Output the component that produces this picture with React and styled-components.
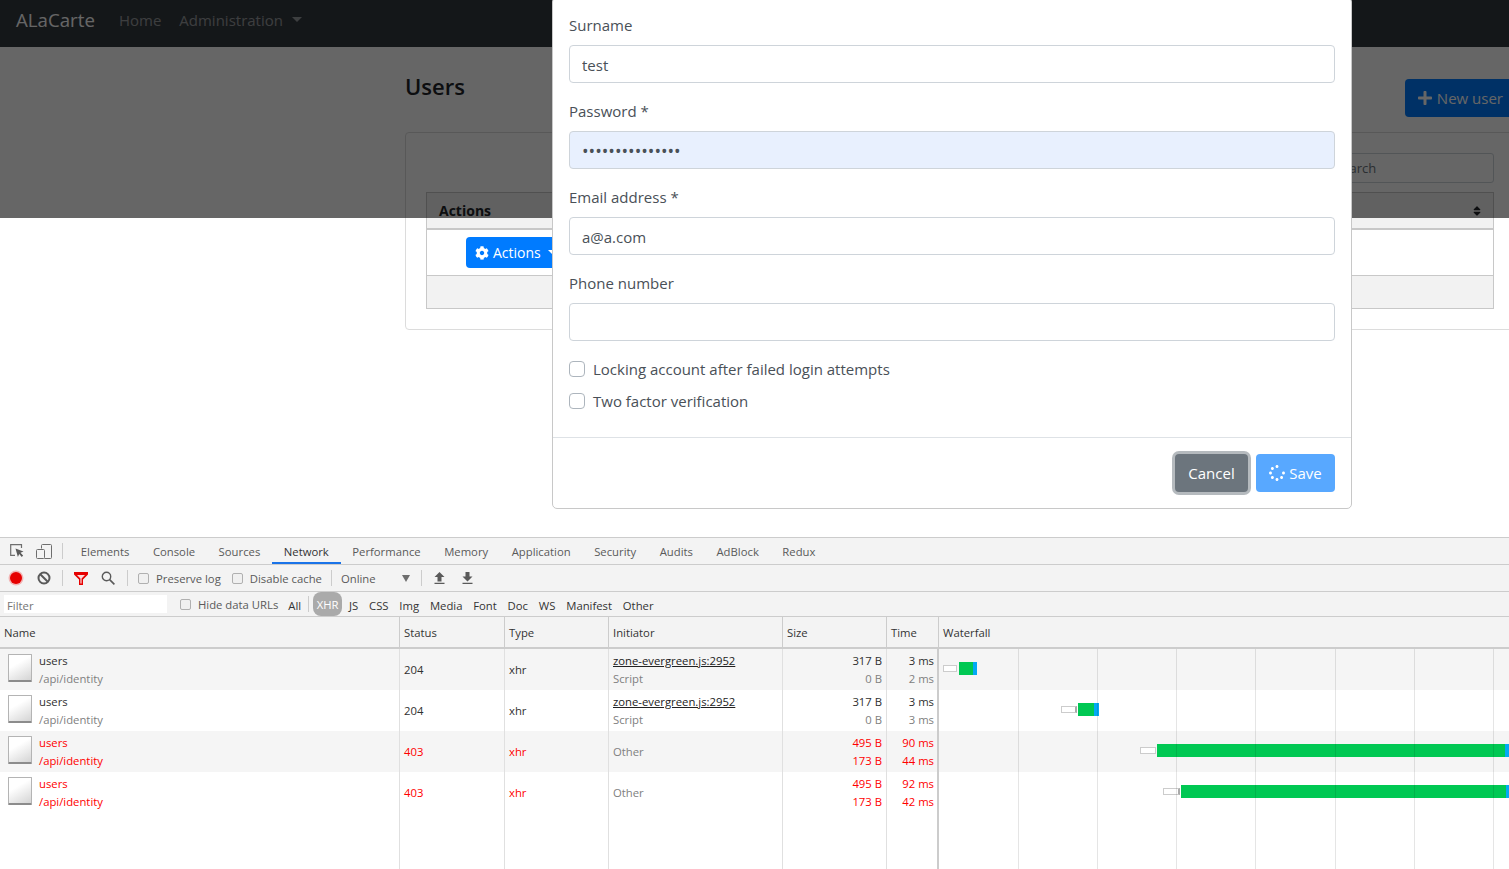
import styled, { createGlobalStyle } from 'styled-components';
import { FaCog, FaPlus, FaSort, FaSpinner } from 'react-icons/fa';

const GlobalStyle = createGlobalStyle`
  html, body {
    margin: 0;
    padding: 0;
    background: #fff;
  }
  * {
    box-sizing: border-box;
  }
`;

const FONT = `'Open Sans', 'Noto Sans', sans-serif`;

const Shell = styled.div`
  width: 1509px;
  height: 869px;
  display: flex;
  flex-direction: column;
  overflow: hidden;
  font-family: ${FONT};
`;

/* ---------- app under the devtools ---------- */

const AppArea = styled.div`
  position: relative;
  height: 537px;
  flex: none;
  overflow: hidden;
  background: #fff;
`;

const Navbar = styled.nav`
  height: 47px;
  background: #343a40;
  display: flex;
  align-items: center;
  padding: 0 0 8px 16px;
`;

const Brand = styled.a`
  color: #fff;
  font-size: 18.7px;
  margin-right: 24px;
`;

const NavLink = styled.a`
  color: rgba(255, 255, 255, 0.5);
  font-size: 15px;
  margin-right: 18px;
  display: flex;
  align-items: center;
`;

const Caret = styled.span`
  display: inline-block;
  margin-left: ${(p) => p.$gap || 9}px;
  border-top: 5px solid ${(p) => p.$color || 'rgba(255, 255, 255, 0.5)'};
  border-left: 5px solid transparent;
  border-right: 5px solid transparent;
`;

const Main = styled.main`
  width: 1110px;
  margin-left: 405px;
`;

const TitleRow = styled.div`
  display: flex;
  justify-content: space-between;
  align-items: flex-start;
  padding-top: 32px;
  margin-bottom: 15px;
`;

const Title = styled.h2`
  margin: -5px 0 0;
  line-height: 24px;
  font-size: 22px;
  font-weight: 600;
  color: #212529;
`;

const PrimaryButton = styled.button`
  height: 38px;
  padding: 0 12px;
  border: 0;
  border-radius: 4px;
  background: #007bff;
  color: #fff;
  font: 15px ${FONT};
  display: flex;
  align-items: center;
  gap: 4px;
`;

const Card = styled.section`
  border: 1px solid #dcdcdc;
  border-radius: 4px;
  padding: 20px;
`;

const SearchRow = styled.div`
  display: flex;
  justify-content: flex-end;
  margin-bottom: 9px;
`;

const SearchInput = styled.input`
  width: 172px;
  height: 30px;
  padding: 0 12px;
  border: 1px solid #ced4da;
  border-radius: 3px;
  font: 13px ${FONT};
  &::placeholder {
    color: #6c757d;
  }
`;

const Table = styled.div`
  border: 1px solid #c8c8c8;
`;

const TableHead = styled.div`
  height: 37px;
  background: #f2f2f2;
  border-bottom: 2px solid #c8c8c8;
  padding: 0 10px 0 12px;
  display: flex;
  justify-content: space-between;
  align-items: center;
  font-size: 14px;
  font-weight: 700;
  color: #212529;
`;

const TableRow = styled.div`
  height: 46px;
  padding-left: 39px;
  border-bottom: 1px solid #c8c8c8;
  display: flex;
  align-items: center;
`;

const TableFoot = styled.div`
  height: 32px;
  background: #f2f2f2;
`;

const ActionsButton = styled(PrimaryButton)`
  height: 31px;
  padding: 0 10px 0 9px;
  font-size: 14px;
`;

const Backdrop = styled.div`
  position: absolute;
  top: 0;
  left: 0;
  width: 100%;
  height: 218px;
  background: rgba(0, 0, 0, 0.6);
`;

const Modal = styled.div`
  position: absolute;
  top: -3px;
  left: 552px;
  width: 800px;
  background: #fff;
  border: 1px solid #c8c8c8;
  border-radius: 5px;
`;

const ModalBody = styled.div`
  padding: 15px 16px 16px;
`;

const FormGroup = styled.div`
  margin-bottom: 16px;
`;

const FieldLabel = styled.label`
  display: block;
  height: 24px;
  line-height: 24px;
  margin-bottom: 8px;
  font-size: 15px;
  color: #495057;
`;

const TextInput = styled.input`
  display: block;
  width: 100%;
  height: 38px;
  padding: 2px 12px 0;
  border: 1px solid #ced4da;
  border-radius: 4px;
  font: 15px ${FONT};
  color: #495057;
  background: #fff;
`;

const PasswordInput = styled(TextInput).attrs({ type: 'password' })`
  font-size: 17.5px;
  background: #e8f0fe;
`;

const CheckRow = styled.label`
  display: flex;
  align-items: center;
  gap: 8px;
  height: 24px;
  margin-bottom: 8px;
  font-size: 15px;
  color: #495057;
`;

const ModalCheck = styled.input.attrs({ type: 'checkbox' })`
  appearance: none;
  width: 16px;
  height: 16px;
  margin: 0;
  border: 1px solid #adb5bd;
  border-radius: 4px;
  background: #fff;
`;

const ModalFooter = styled.div`
  border-top: 1px solid #dee2e6;
  padding: 16px;
  display: flex;
  justify-content: flex-end;
  gap: 8px;
`;

const CancelButton = styled.button`
  height: 38px;
  width: 73px;
  border: 0;
  border-radius: 4px;
  background: #6c757d;
  color: #fff;
  font: 15px ${FONT};
  box-shadow: 0 0 0 3px rgba(108, 117, 125, 0.5);
`;

const SaveButton = styled(PrimaryButton)`
  width: 79px;
  background: #58a8ff;
  justify-content: center;
`;

/* ---------- devtools ---------- */

const Devtools = styled.div`
  flex: 1;
  min-height: 0;
  display: flex;
  flex-direction: column;
  border-top: 1px solid #ccc;
  background: #f3f3f3;
  font-size: 11.3px;
  color: #5a5a5a;
`;

const Bar = styled.div`
  height: ${(p) => p.$height}px;
  flex: none;
  display: flex;
  align-items: center;
  border-bottom: 1px solid #ccc;
`;

const IconSlot = styled.span`
  display: flex;
  align-items: center;
  justify-content: center;
  width: ${(p) => p.$width || 28}px;
  height: 100%;
  flex: none;
`;

const Divider = styled.span`
  width: 1px;
  height: 16px;
  background: #ccc;
  flex: none;
  margin: ${(p) => p.$margin || '0 8px'};
`;

const Tab = styled.div`
  height: 100%;
  display: flex;
  align-items: center;
  padding: 0 11.75px;
  color: ${(p) => (p.$active ? '#333' : '#5a5a5a')};
  box-shadow: ${(p) => (p.$active ? 'inset 0 -2px 0 #1a73e8' : 'none')};
`;

const DevCheck = styled.input.attrs({ type: 'checkbox' })`
  appearance: none;
  width: 11px;
  height: 11px;
  margin: 0 7px 0 0;
  border: 1px solid #b0b0b0;
  border-radius: 2px;
  background: #f0f0f0;
  flex: none;
`;

const CheckLabel = styled.label`
  display: flex;
  align-items: center;
  margin-right: ${(p) => p.$gap || 11}px;
  white-space: nowrap;
`;

const ThrottleSelect = styled.div`
  width: 69px;
  display: flex;
  align-items: center;
  justify-content: space-between;
  flex: none;
`;

const SelectArrow = styled.span`
  border-top: 7px solid #6e6e6e;
  border-left: 4px solid transparent;
  border-right: 4px solid transparent;
`;

const FilterInput = styled.input`
  width: 163px;
  height: 18px;
  margin: 0 13px 0 4px;
  padding: 2px 3px 0;
  border: 0;
  background: #fff;
  font: 11.3px ${FONT};
  &::placeholder {
    color: #757575;
  }
`;

const TypeChip = styled.span`
  padding: ${(p) => (p.$active ? '5px 3.5px 4px' : '2px 0 0')};
  margin-right: ${(p) => (p.$active ? 7 : p.$gap || 10.8)}px;
  border-radius: 8px;
  background: ${(p) => (p.$active ? '#aaa' : 'transparent')};
  color: ${(p) => (p.$active ? '#fff' : '#333')};
`;

const COLUMNS = '400px 105px 104px 174px 104px 52px 1fr';

const HeaderRow = styled.div`
  height: 32px;
  flex: none;
  display: grid;
  grid-template-columns: ${COLUMNS};
  border-bottom: 2px solid #ccc;
`;

const HeaderCell = styled.div`
  display: flex;
  align-items: center;
  padding-left: 4px;
  border-right: 1px solid #ccc;
  color: #333;
  &:last-child {
    border-right: 0;
  }
`;

const Row = styled.div`
  height: 41px;
  flex: none;
  display: grid;
  grid-template-columns: ${COLUMNS};
  background: ${(p) => (p.$shaded ? '#f5f5f5' : '#fff')};
  color: ${(p) => (p.$failed ? '#f00' : '#303030')};
`;

const Filler = styled(Row)`
  flex: 1;
  height: auto;
  background: #fff;
`;

const Cell = styled.div`
  padding: ${(p) => (p.$heavy ? '0 3px 0 4px' : '0 4px')};
  border-right: ${(p) => (p.$heavy ? '2px solid #ccc' : '1px solid #e0e0e0')};
  display: flex;
  flex-direction: column;
  justify-content: center;
  align-items: ${(p) => (p.$right ? 'flex-end' : 'flex-start')};
  line-height: 18px;
  white-space: nowrap;
`;

const NameCell = styled(Cell)`
  flex-direction: row;
  justify-content: flex-start;
  align-items: center;
  padding-left: 8px;
  gap: 7px;
`;

const FileIcon = styled.span`
  width: 24px;
  height: 28px;
  flex: none;
  margin-bottom: 3px;
  border: 1px solid #b4b4b4;
  border-bottom: 2px solid #8c8c8c;
  border-radius: 1px;
  background: linear-gradient(150deg, #fff 35%, #d4d4d4);
`;

const Stack = styled.div`
  display: flex;
  flex-direction: column;
`;

const Sub = styled.span`
  color: ${(p) => (p.$failed ? '#f00' : '#808080')};
`;

const InitiatorLink = styled.span`
  text-decoration: underline;
  color: #222;
`;

const WaterfallCell = styled.div`
  position: relative;
  overflow: hidden;
`;

const GridLine = styled.span`
  position: absolute;
  top: 0;
  bottom: 0;
  left: ${(p) => p.$left}px;
  width: 1px;
  background: rgba(0, 0, 0, 0.1);
`;

const Segment = styled.span`
  position: absolute;
  top: 13px;
  height: 13px;
  left: ${(p) => p.$left}px;
  width: ${(p) => p.$width}px;
  background: ${(p) => p.$color};
`;

const WaitSegment = styled.span`
  position: absolute;
  top: 16px;
  height: 7px;
  left: ${(p) => p.$left}px;
  width: ${(p) => p.$width}px;
  background: #fff;
  border: 1px solid #ccc;
  border-right: ${(p) => (p.$tail ? '2px solid #aaa' : '1px solid #ccc')};
`;

const TABS = ['Elements', 'Console', 'Sources', 'Network', 'Performance', 'Memory', 'Application', 'Security', 'Audits', 'AdBlock', 'Redux'];
const TYPES = ['JS', 'CSS', 'Img', 'Media', 'Font', 'Doc', 'WS', 'Manifest', 'Other'];
const GRID_LINES = [79, 158, 237, 316, 396, 475, 554];

const REQUESTS = [
  { status: '204', initiator: true, size: ['317 B', '0 B'], time: ['3 ms', '2 ms'], bar: { wait: [4, 14], green: [20, 14], blue: [34, 4] } },
  { status: '204', initiator: true, size: ['317 B', '0 B'], time: ['3 ms', '3 ms'], bar: { wait: [122, 16], tail: true, green: [139, 16], blue: [155, 5] } },
  { status: '403', failed: true, size: ['495 B', '173 B'], time: ['90 ms', '44 ms'], bar: { wait: [201, 16], green: [218, 348], blue: [566, 4] } },
  { status: '403', failed: true, size: ['495 B', '173 B'], time: ['92 ms', '42 ms'], bar: { wait: [224, 17], tail: true, green: [242, 325], blue: [567, 3] } },
];

const InspectIcon = () => (
  <svg width="14" height="14" viewBox="0 0 14 14">
    <path d="M11.5 4V.7H.7v10.6H5" fill="none" stroke="#6e6e6e" strokeWidth="1.2" />
    <path d="M5.5 4.5l8 3-3 1.3 2.6 2.8-1.3 1.3-2.6-2.8-1.3 3z" fill="#5a5a5a" />
  </svg>
);

const DeviceIcon = () => (
  <svg width="16" height="15" viewBox="0 0 16 15">
    <path d="M5.5 4.5V1.5a1 1 0 0 1 1-1h8a1 1 0 0 1 1 1v12a1 1 0 0 1-1 1h-6" fill="none" stroke="#6e6e6e" />
    <rect x="0.5" y="5.5" width="8" height="9" rx="1" fill="none" stroke="#6e6e6e" />
  </svg>
);

const RecordIcon = () => (
  <svg width="16" height="16" viewBox="0 0 16 16">
    <circle cx="8" cy="8" r="7.5" fill="#f2b5b5" />
    <circle cx="8" cy="8" r="6" fill="#e60000" />
  </svg>
);

const ClearIcon = () => (
  <svg width="14" height="14" viewBox="0 0 14 14">
    <circle cx="7" cy="7" r="5.5" fill="none" stroke="#5a5a5a" strokeWidth="2" />
    <path d="M3 3l8 8" stroke="#5a5a5a" strokeWidth="2" />
  </svg>
);

const FunnelIcon = () => (
  <svg width="14" height="13" viewBox="0 0 14 13">
    <path d="M0 0h14v2.5L9 7.5V13H5V7.5L0 2.5z" fill="#e60000" />
    <path d="M3 3h8L7.6 6.4v5H6.4v-5z" fill="#fbdada" />
  </svg>
);

const SearchIcon = () => (
  <svg width="14" height="14" viewBox="0 0 14 14">
    <circle cx="5.5" cy="5.5" r="4.2" fill="none" stroke="#5a5a5a" strokeWidth="1.4" />
    <path d="M8.6 8.6L13.4 13.4" stroke="#5a5a5a" strokeWidth="1.6" />
  </svg>
);

const ArrowIcon = ({ down }) => (
  <svg width="11" height="12" viewBox="0 0 11 12">
    {down ? (
      <path d="M3.5 0h4v4.5h3L5.5 9.5 .5 4.5h3zM.5 10.8h10V12H.5z" fill="#5a5a5a" />
    ) : (
      <path d="M5.5 0l5 5h-3v4.5h-4V5h-3zM.5 10.8h10V12H.5z" fill="#5a5a5a" />
    )}
  </svg>
);

const RequestRow = ({ request, shaded }) => {
  const { status, failed, initiator, size, time, bar } = request;
  return (
    <Row $shaded={shaded} $failed={failed}>
      <NameCell>
        <FileIcon />
        <Stack>
          <span>users</span>
          <Sub $failed={failed}>/api/identity</Sub>
        </Stack>
      </NameCell>
      <Cell>{status}</Cell>
      <Cell>xhr</Cell>
      {initiator ? (
        <Cell>
          <InitiatorLink>zone-evergreen.js:2952</InitiatorLink>
          <Sub>Script</Sub>
        </Cell>
      ) : (
        <Cell>
          <Sub>Other</Sub>
        </Cell>
      )}
      <Cell $right>
        <span>{size[0]}</span>
        <Sub $failed={failed}>{size[1]}</Sub>
      </Cell>
      <Cell $right $heavy>
        <span>{time[0]}</span>
        <Sub $failed={failed}>{time[1]}</Sub>
      </Cell>
      <WaterfallCell>
        <WaitSegment $left={bar.wait[0]} $width={bar.wait[1]} $tail={bar.tail} />
        <Segment $left={bar.green[0]} $width={bar.green[1]} $color="#00c853" />
        <Segment $left={bar.blue[0]} $width={bar.blue[1]} $color="#03a9f4" />
        {GRID_LINES.map((left) => (
          <GridLine key={left} $left={left} />
        ))}
      </WaterfallCell>
    </Row>
  );
};

export default function App() {
  return (
    <>
      <GlobalStyle />
      <Shell>
        <AppArea>
          <Navbar>
            <Brand>ALaCarte</Brand>
            <NavLink>Home</NavLink>
            <NavLink>
              Administration
              <Caret />
            </NavLink>
          </Navbar>
          <Main>
            <TitleRow>
              <Title>Users</Title>
              <PrimaryButton>
                <FaPlus size={16} />
                New user
              </PrimaryButton>
            </TitleRow>
            <Card>
              <SearchRow>
                <SearchInput placeholder="Search" />
              </SearchRow>
              <Table>
                <TableHead>
                  Actions
                  <FaSort size={12} />
                </TableHead>
                <TableRow>
                  <ActionsButton>
                    <FaCog size={14} />
                    Actions
                    <Caret $color="#fff" $gap={3} />
                  </ActionsButton>
                </TableRow>
                <TableFoot />
              </Table>
            </Card>
          </Main>
          <Backdrop />
          <Modal>
            <ModalBody>
              <FormGroup>
                <FieldLabel>Surname</FieldLabel>
                <TextInput defaultValue="test" />
              </FormGroup>
              <FormGroup>
                <FieldLabel>Password *</FieldLabel>
                <PasswordInput defaultValue="aaaaaaaaaaaaaaa" />
              </FormGroup>
              <FormGroup>
                <FieldLabel>Email address *</FieldLabel>
                <TextInput defaultValue="a@a.com" />
              </FormGroup>
              <FormGroup>
                <FieldLabel>Phone number</FieldLabel>
                <TextInput />
              </FormGroup>
              <CheckRow>
                <ModalCheck />
                Locking account after failed login attempts
              </CheckRow>
              <CheckRow>
                <ModalCheck />
                Two factor verification
              </CheckRow>
            </ModalBody>
            <ModalFooter>
              <CancelButton>Cancel</CancelButton>
              <SaveButton>
                <FaSpinner size={16} />
                Save
              </SaveButton>
            </ModalFooter>
          </Modal>
        </AppArea>

        <Devtools>
          <Bar $height={27}>
            <IconSlot $width={33}><InspectIcon /></IconSlot>
            <IconSlot $width={21}><DeviceIcon /></IconSlot>
            <Divider $margin="0 6px 0 8px" />
            {TABS.map((tab) => (
              <Tab key={tab} $active={tab === 'Network'}>{tab}</Tab>
            ))}
          </Bar>
          <Bar $height={27}>
            <IconSlot $width={32}><RecordIcon /></IconSlot>
            <IconSlot $width={24}><ClearIcon /></IconSlot>
            <Divider $margin="0 4px 0 6px" />
            <IconSlot $width={28}><FunnelIcon /></IconSlot>
            <IconSlot $width={26}><SearchIcon /></IconSlot>
            <Divider $margin="0 10px 0 6px" />
            <CheckLabel><DevCheck />Preserve log</CheckLabel>
            <CheckLabel $gap={9}><DevCheck />Disable cache</CheckLabel>
            <Divider $margin="0 9px 0 0" />
            <ThrottleSelect>
              Online
              <SelectArrow />
            </ThrottleSelect>
            <Divider $margin="0 9px 0 11px" />
            <IconSlot $width={18}><ArrowIcon /></IconSlot>
            <IconSlot $width={38}><ArrowIcon down /></IconSlot>
          </Bar>
          <Bar $height={25}>
            <FilterInput placeholder="Filter" />
            <CheckLabel $gap={10}><DevCheck />Hide data URLs</CheckLabel>
            <TypeChip $gap={7}>All</TypeChip>
            <Divider $margin="0 4px 0 0" />
            <TypeChip $active>XHR</TypeChip>
            {TYPES.map((type) => (
              <TypeChip key={type}>{type}</TypeChip>
            ))}
          </Bar>
          <HeaderRow>
            <HeaderCell>Name</HeaderCell>
            <HeaderCell>Status</HeaderCell>
            <HeaderCell>Type</HeaderCell>
            <HeaderCell>Initiator</HeaderCell>
            <HeaderCell>Size</HeaderCell>
            <HeaderCell>Time</HeaderCell>
            <HeaderCell>Waterfall</HeaderCell>
          </HeaderRow>
          {REQUESTS.map((request, index) => (
            <RequestRow key={index} request={request} shaded={index % 2 === 0} />
          ))}
          <Filler>
            <Cell />
            <Cell />
            <Cell />
            <Cell />
            <Cell />
            <Cell $heavy />
            <WaterfallCell>
              {GRID_LINES.map((left) => (
                <GridLine key={left} $left={left} />
              ))}
            </WaterfallCell>
          </Filler>
        </Devtools>
      </Shell>
    </>
  );
}
